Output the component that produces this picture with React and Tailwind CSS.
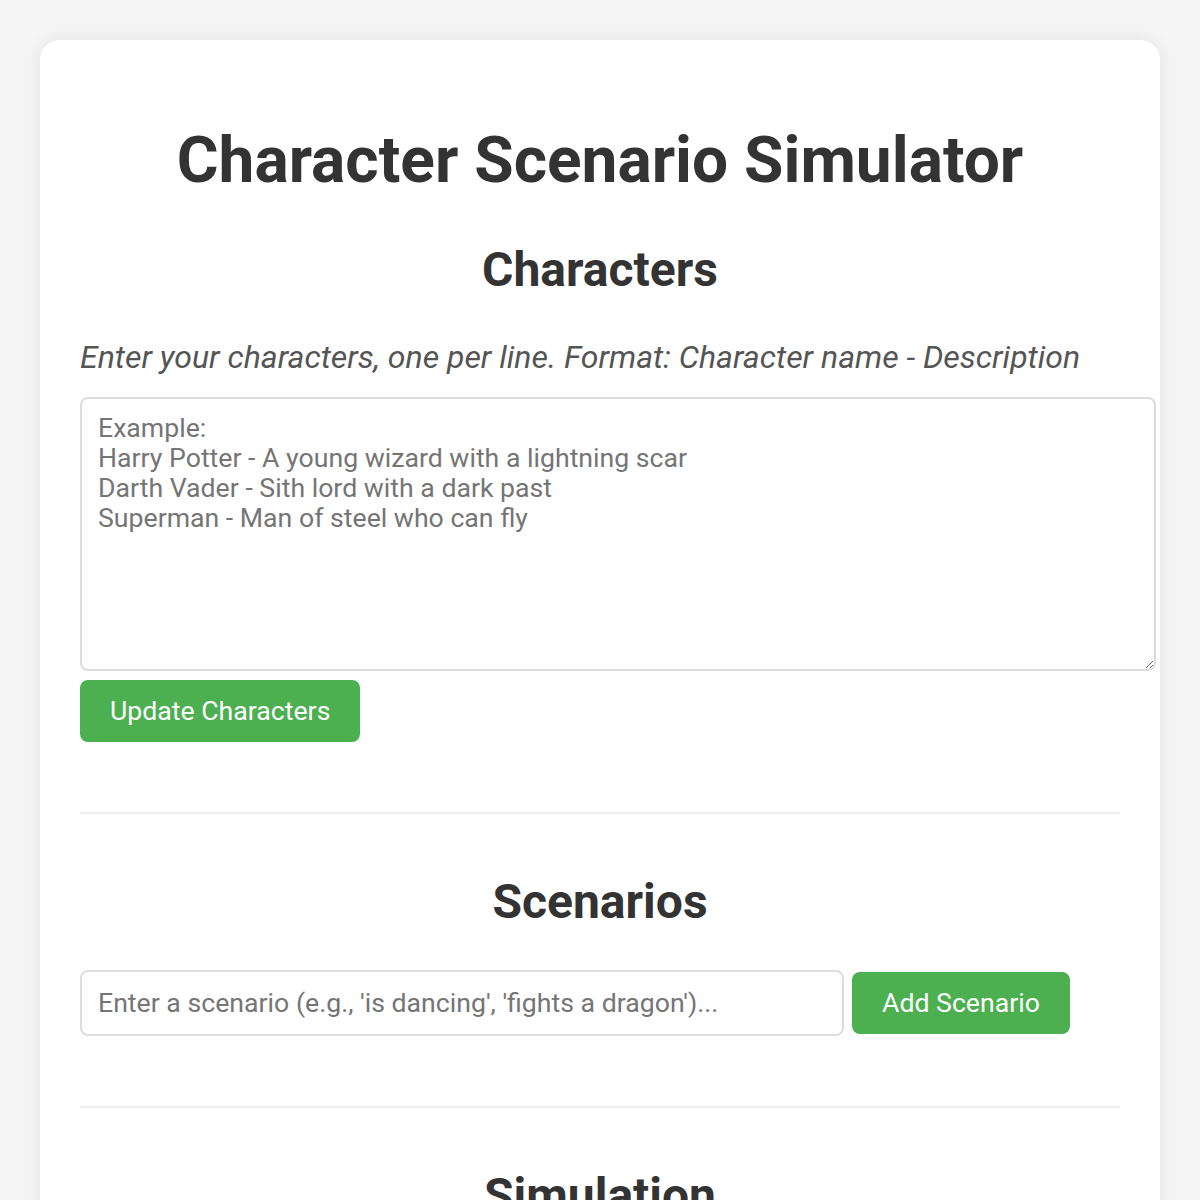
import React from "react";

const App = () => {
  return (
    <div className="min-h-screen bg-[#f5f5f5] px-10 pt-10 font-['Roboto',sans-serif] text-[#333]">
      <div className="bg-white rounded-[20px] shadow-[0_0_20px_rgba(0,0,0,0.08)] px-10 pt-10 pb-10 h-[1200px]">
        {/* Title */}
        <h1 className="text-center text-[64px] leading-[75px] font-bold mt-[43px]">
          Character Scenario Simulator
        </h1>

        {/* Characters */}
        <h2 className="text-center text-[48px] leading-[56px] font-bold mt-[44px]">Characters</h2>
        <p className="italic text-[32px] leading-[37.5px] text-[#555] mt-[41px]">
          Enter your characters, one per line. Format: Character name - Description
        </p>
        <textarea
          className="block box-content w-full h-[238px] mt-[20px] px-4 pt-[14px] pb-[18px] border-2 border-[#ddd] rounded-[8px] text-[26.67px] leading-[30px] text-[#333] placeholder:text-[#757575] outline-none"
          placeholder={"Example:\nHarry Potter - A young wizard with a lightning scar\nDarth Vader - Sith lord with a dark past\nSuperman - Man of steel who can fly"}
        />
        <button className="mt-[9px] h-[62px] px-[30px] bg-[#4caf50] text-white text-[26.67px] rounded-[8px]">
          Update Characters
        </button>

        <hr className="border-t-2 border-[#eee] mt-[70px]" />

        {/* Scenarios */}
        <h2 className="text-center text-[48px] leading-[56px] font-bold mt-[60px]">Scenarios</h2>
        <div className="flex items-center gap-2 mt-[40px]">
          <input
            className="w-[764px] h-[66px] px-4 border-2 border-[#ddd] rounded-[8px] text-[26.67px] placeholder:text-[#757575] outline-none"
            placeholder="Enter a scenario (e.g., 'is dancing', 'fights a dragon')..."
          />
          <button className="h-[62px] px-[30px] bg-[#4caf50] text-white text-[26.67px] rounded-[8px]">
            Add Scenario
          </button>
        </div>

        <hr className="border-t-2 border-[#eee] mt-[70px]" />

        {/* Simulation */}
        <h2 className="text-center text-[48px] leading-[56px] font-bold mt-[60px]">Simulation</h2>
      </div>
    </div>
  );
};

export default App;
